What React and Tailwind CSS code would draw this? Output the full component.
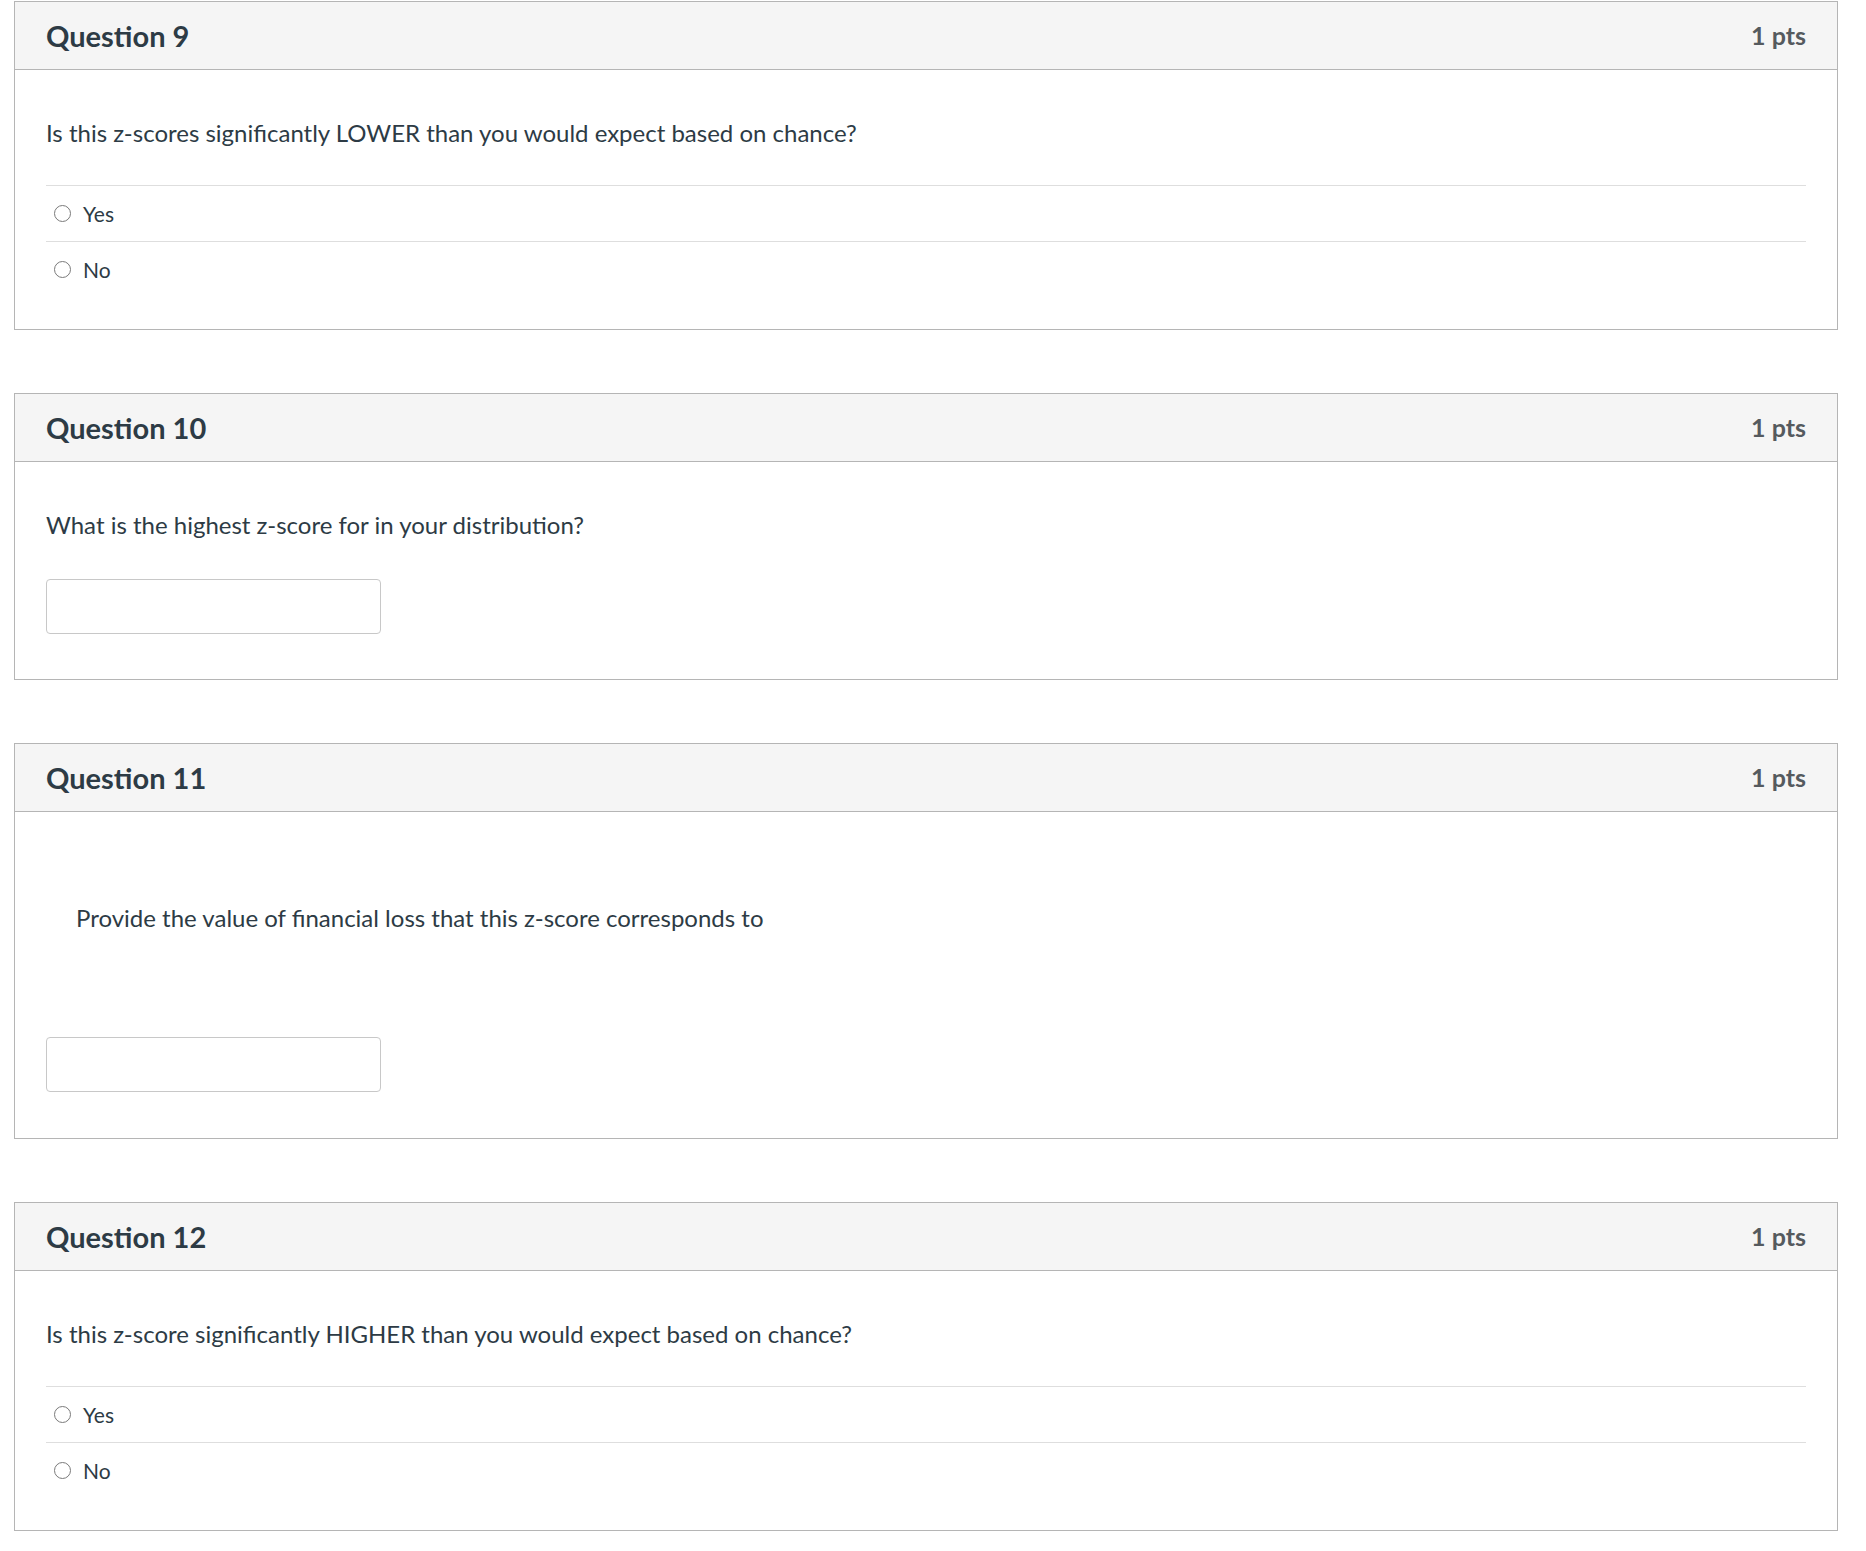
const font = { fontFamily: "Lato, 'Open Sans', sans-serif" };

function Header({ title }) {
  return (
    <div className="flex h-[68px] items-center justify-between border-b border-[#b5b5b5] bg-[#f5f5f5] px-[31px]">
      <div className="text-[29px] font-bold text-[#2d3b45]">{title}</div>
      <div className="text-[25px] font-bold text-[#555a5e]">1 pts</div>
    </div>
  );
}

function Radio({ label }) {
  return (
    <div className="flex h-[56px] items-center border-t border-[#dedede]">
      <span className="ml-[8px] h-[17px] w-[17px] rounded-full border border-[#7a7a7a]" />
      <span className="ml-[12px] text-[21px] text-[#2d3b45]">{label}</span>
    </div>
  );
}

function Card({ title, children }) {
  return (
    <div className="border border-[#b5b5b5] bg-white">
      <Header title={title} />
      {children}
    </div>
  );
}

function Question({ children, className = "" }) {
  return (
    <div className={"text-[24px] leading-[36px] text-[#2d3b45] " + className}>
      {children}
    </div>
  );
}

function TextBox() {
  return (
    <div className="h-[55px] w-[335px] rounded-[4px] border border-[#c8c8c8] bg-white" />
  );
}

export default function App() {
  return (
    <div className="min-h-screen bg-white pt-[1px] pl-[14px] pr-[28px]" style={font}>
      <div className="flex flex-col gap-[63px]">
        <Card title="Question 9">
          <div className="px-[31px] pt-[45px] pb-[32px]">
            <Question>
              Is this z-scores significantly LOWER than you would expect based on chance?
            </Question>
            <div className="mt-[34px]">
              <Radio label="Yes" />
              <Radio label="No" />
            </div>
          </div>
        </Card>

        <Card title="Question 10">
          <div className="px-[31px] pt-[45px] pb-[45px]">
            <Question>What is the highest z-score for in your distribution?</Question>
            <div className="mt-[36px]">
              <TextBox />
            </div>
          </div>
        </Card>

        <Card title="Question 11">
          <div className="px-[31px] pt-[88px] pb-[46px]">
            <Question className="pl-[30px]">
              Provide the value of financial loss that this z-score corresponds to
            </Question>
            <div className="mt-[101px]">
              <TextBox />
            </div>
          </div>
        </Card>

        <Card title="Question 12">
          <div className="px-[31px] pt-[45px] pb-[32px]">
            <Question>
              Is this z-score significantly HIGHER than you would expect based on chance?
            </Question>
            <div className="mt-[34px]">
              <Radio label="Yes" />
              <Radio label="No" />
            </div>
          </div>
        </Card>
      </div>
    </div>
  );
}
